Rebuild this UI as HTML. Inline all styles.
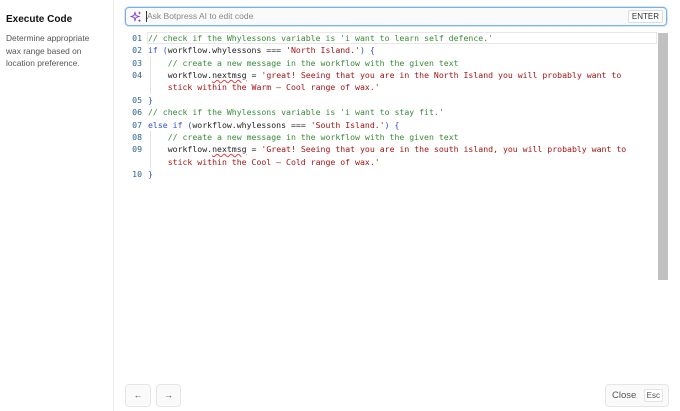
<!DOCTYPE html>
<html><head><style>
body{margin:0;width:680px;height:411px;background:#fff;font-family:"Liberation Sans",sans-serif;position:relative;overflow:hidden}
.side{position:absolute;left:0;top:0;width:113px;height:411px;border-right:1px solid #ececec}
h1{position:absolute;left:6px;top:14px;margin:0;font-size:10px;font-weight:bold;color:#111}
.desc{position:absolute;left:6px;top:32px;font-size:8.4px;line-height:12.5px;color:#555;width:92px}
.inp{position:absolute;left:125px;top:7px;width:540px;height:17px;border:1px solid #7ab0e8;border-radius:4px;box-shadow:0 0 0 1px #d6e7fa;background:#fafafa}
.inp .ph{position:absolute;left:21px;top:3px;font-size:8.5px;color:#888}
.inp .cur{position:absolute;left:20px;top:3px;width:1px;height:11px;background:#333}
.inp .ent{position:absolute;right:3px;top:2px;font-size:8px;color:#333;border:1px solid #ddd;border-radius:2px;padding:1px 3px;background:#fff}
.code{position:absolute;left:118px;top:32px;width:540px;font-family:"DejaVu Sans Mono","Liberation Mono",monospace;font-size:8.2px;}
.ln{position:absolute;left:0;width:24px;text-align:right;color:#2d6290}
.l{position:absolute;left:30px;white-space:pre;color:#222}
.hl{position:absolute;left:29px;top:0;width:510px;height:12px;border:1px solid #e8e8e8;box-sizing:border-box}
.c{color:#3a8a3a}.k{color:#3050c8}.s{color:#a31515}
.u{text-decoration:underline wavy #e04040;text-decoration-thickness:0.5px}
.guide{position:absolute;left:32px;width:1px;background:#e2e2e2}
.sb{position:absolute;left:658px;top:33px;width:10px;height:247px;background:#c1c1c1}
.btn{position:absolute;top:384px;height:21px;border:1px solid #e6e6e6;border-radius:4px;background:#fafafa;font-size:9px;color:#555;text-align:center;line-height:21px}
</style></head><body>
<div class="side"></div>
<h1>Execute Code</h1>
<div class="desc">Determine appropriate wax range based on location preference.</div>
<div class="inp"><svg style="position:absolute;left:4px;top:3px" width="12" height="12" viewBox="0 0 12 12"><path d="M5 1.5 L6 4.5 L9 5.5 L6 6.5 L5 9.5 L4 6.5 L1 5.5 L4 4.5Z" fill="none" stroke="#7a3bd0" stroke-width="0.9"/><path d="M9.5 0.8v2.4M8.3 2h2.4M9.5 8.5v2.4M8.3 9.7h2.4" stroke="#7a3bd0" stroke-width="0.8"/></svg><div class="cur"></div><span class="ph">Ask Botpress AI to edit code</span><span class="ent">ENTER</span></div>
<div class="code">
<div class="hl"></div>
<div class="guide" style="top:25px;height:37px"></div>
<div class="guide" style="top:99px;height:37px"></div>
<div class="ln" style="top:1px">01</div><div class="l" style="top:1px"><span class="c">// check if the Whylessons variable is 'i want to learn self defence.'</span></div>
<div class="ln" style="top:13px">02</div><div class="l" style="top:13px"><span class="k">if (</span>workflow.whylessons === <span class="s">'North Island.'</span><span class="k">) {</span></div>
<div class="ln" style="top:26px">03</div><div class="l" style="top:26px">    <span class="c">// create a new message in the workflow with the given text</span></div>
<div class="ln" style="top:38px">04</div><div class="l" style="top:38px">    workflow.<span class="u">nextmsg</span> = <span class="s">'great! Seeing that you are in the North Island you will probably want to</span></div>
<div class="l" style="top:50px">    <span class="s">stick within the Warm – Cool range of wax.'</span></div>
<div class="ln" style="top:63px">05</div><div class="l" style="top:63px"><span class="k">}</span></div>
<div class="ln" style="top:75px">06</div><div class="l" style="top:75px"><span class="c">// check if the Whylessons variable is 'i want to stay fit.'</span></div>
<div class="ln" style="top:88px">07</div><div class="l" style="top:88px"><span class="k">else if (</span>workflow.whylessons === <span class="s">'South Island.'</span><span class="k">) {</span></div>
<div class="ln" style="top:100px">08</div><div class="l" style="top:100px">    <span class="c">// create a new message in the workflow with the given text</span></div>
<div class="ln" style="top:112px">09</div><div class="l" style="top:112px">    workflow.<span class="u">nextmsg</span> = <span class="s">'Great! Seeing that you are in the south island, you will probably want to</span></div>
<div class="l" style="top:125px">    <span class="s">stick within the Cool – Cold range of wax.'</span></div>
<div class="ln" style="top:137px">10</div><div class="l" style="top:137px"><span class="k">}</span></div>
</div>
<div class="sb"></div>
<div class="btn" style="left:125px;width:24px">←</div>
<div class="btn" style="left:156px;width:23px">→</div>
<div class="btn" style="left:605px;width:62px;text-align:left;font-size:9.5px"><span style="margin-left:6px">Close</span><span style="position:absolute;right:5px;top:4px;line-height:11px;font-size:8px;border:1px solid #e3e3e3;border-radius:2px;padding:0 2px;background:#fff">Esc</span></div>
</body></html>
